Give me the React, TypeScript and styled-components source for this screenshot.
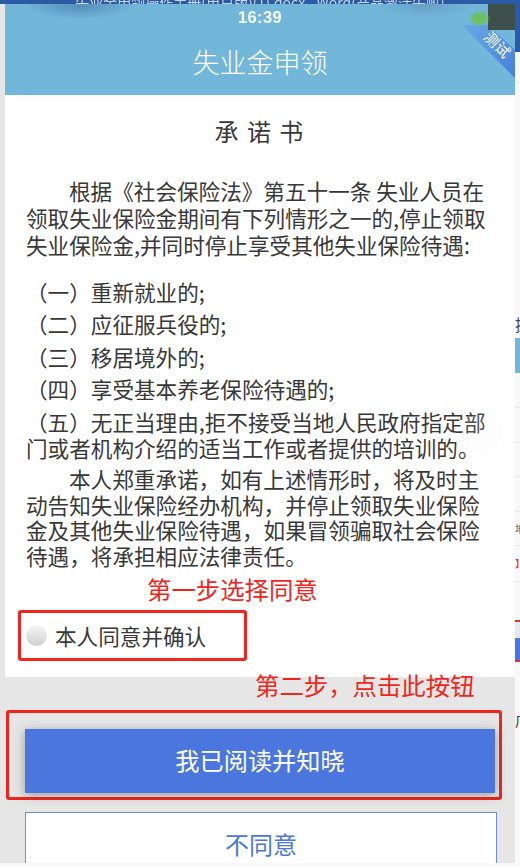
import React from 'react';
import styled, { createGlobalStyle } from 'styled-components';

const CJK = `"Noto Sans CJK SC", "Noto Sans", sans-serif`;

const GlobalStyle = createGlobalStyle`
  html, body {
    margin: 0;
    padding: 0;
    background: #f8f8f8;
    font-family: ${CJK};
  }
  * {
    box-sizing: border-box;
  }
`;

const Page = styled.div`
  position: relative;
  width: 520px;
  height: 867px;
  overflow: hidden;
  background: #f8f8f8;
`;

const BackBar = styled.div`
  height: 52px;
  background: #2a5ba4;
  color: #c9d6e8;
  font-size: 14px;
  line-height: 4px;
  text-align: center;
  white-space: nowrap;
  overflow: hidden;
  filter: blur(0.6px);
`;

const BackRows = styled.div`
  display: flex;
  flex-direction: column;
  align-items: flex-end;
`;

const BackRow = styled.div<{ $h: number; $bg?: string; $line?: boolean; $color?: string; $size?: number }>`
  width: 5px;
  height: ${(p) => p.$h}px;
  background: ${(p) => p.$bg || 'transparent'};
  border-bottom: ${(p) => (p.$line ? '1px solid #e8e8e8' : 'none')};
  color: ${(p) => p.$color || '#444'};
  font-size: ${(p) => p.$size || 10}px;
  line-height: ${(p) => p.$h}px;
  white-space: nowrap;
  overflow: hidden;
`;

const Phone = styled.div`
  position: absolute;
  left: 5px;
  top: 4px;
  width: 510px;
  height: 859px;
  display: flex;
  flex-direction: column;
  background: #e6e6e6;
  overflow: hidden;
  box-shadow: -5px 0 0 #e6e6e6;
`;

const Header = styled.header`
  position: relative;
  height: 91px;
  flex: none;
  display: flex;
  flex-direction: column;
  align-items: center;
  background:
    radial-gradient(ellipse 55px 13px at 75px 2px, rgba(62, 110, 155, 0.55), transparent),
    radial-gradient(ellipse 50px 11px at 420px 2px, rgba(90, 130, 165, 0.4), transparent),
    #72b6da;
  color: #fff;
`;

const Time = styled.div`
  margin-top: 3px;
  font-family: 'Liberation Sans', sans-serif;
  font-size: 16.5px;
  font-weight: 700;
  line-height: 20px;
  letter-spacing: 0.4px;
  opacity: 0.92;
`;

const Title = styled.h1`
  margin: 15px 0 0;
  font-size: 27px;
  font-weight: 300;
  line-height: 40px;
`;

const Ribbon = styled.svg`
  position: absolute;
  right: 0;
  top: 21px;
`;

const Signal = styled.div`
  position: absolute;
  right: 0;
  top: 0;
  width: 27px;
  height: 26px;
  background: #3f4f4c;
`;

const Dot = styled.span`
  position: absolute;
  left: -17px;
  top: 8px;
  width: 17px;
  height: 13px;
  border-radius: 50%;
  background: #6cc05c;
  filter: blur(1.5px);
`;

const Content = styled.section`
  height: 582px;
  flex: none;
  padding: 18px 23px 0 21px;
  background: #fff;
  color: #383838;
`;

const Heading = styled.h2`
  margin: 0 0 28px;
  font-size: 24px;
  font-weight: 400;
  line-height: 36px;
  text-align: center;
  word-spacing: 3px;
`;

const Para = styled.p`
  margin: 0 0 20.5px;
  font-size: 21.6px;
  line-height: 27px;
  text-indent: 43px;
`;

const Pledge = styled(Para)`
  margin: -1px 0 0;
  line-height: 25.5px;
`;

const Item = styled.p`
  margin: 0 0 6.5px;
  font-size: 21.6px;
  line-height: 26px;
`;

const Note = styled.div`
  color: #f0261c;
  font-size: 24.4px;
  line-height: 30px;
`;

const StepOne = styled(Note)`
  margin-top: 6px;
  padding-left: 121px;
`;

const RedFrame = styled.div`
  border: 3px solid #f0241c;
  border-radius: 3px;
`;

const AgreeBox = styled(RedFrame)`
  width: 229px;
  height: 51px;
  margin: 6px 0 0 -8px;
  display: flex;
  align-items: center;
  gap: 8px;
  padding-left: 5px;
  font-size: 21.6px;
`;

const Radio = styled.span`
  width: 21px;
  height: 21px;
  border-radius: 50%;
  background: linear-gradient(#f6f6f6, #cfcfcf);
`;

const Footer = styled.footer`
  flex: 1;
  display: flex;
  flex-direction: column;
`;

const StepTwo = styled(Note)`
  margin-top: -7px;
  padding-left: 250px;
`;

const ButtonFrame = styled(RedFrame)`
  width: 496px;
  height: 90px;
  margin: 10px 0 0 1px;
  padding: 16px 3px 0 16px;
`;

const PrimaryButton = styled.button`
  display: block;
  width: 470px;
  height: 64px;
  border: none;
  padding: 0 0 3px;
  background: #4a76dd;
  color: #fff;
  font-family: ${CJK};
  font-size: 24.2px;
  box-shadow: 0 2px 10px rgba(60, 60, 60, 0.45);
`;

const GhostButton = styled.button`
  display: block;
  width: 472px;
  height: 51px;
  margin: 12px 0 0 20px;
  border: 1.5px solid #6f8fd8;
  border-bottom: none;
  background: #fff;
  color: #4a76dd;
  font-family: ${CJK};
  font-size: 24px;
  padding-top: 12px;
`;

const FloatBall = styled.div`
  position: absolute;
  left: 457px;
  top: 409px;
  width: 40px;
  height: 40px;
  border-radius: 50%;
  background: rgba(235, 235, 235, 0.12);
`;

export default function App() {
  return (
    <>
      <GlobalStyle />
      <Page>
        <BackBar>失业金申领操作手册(用户版)(1).docx - Word(产品激活失败)</BackBar>
        <BackRows>
          <BackRow $h={31} $line />
          <BackRow $h={228} />
          <BackRow $h={27} $size={16}>提</BackRow>
          <BackRow $h={35} $bg="#72b6da" />
          <BackRow $h={35} $line />
          <BackRow $h={35} $line />
          <BackRow $h={34} $line />
          <BackRow $h={35} $line />
          <BackRow $h={34} $line $color="#666">地</BackRow>
          <BackRow $h={36} $line $color="#e03030">】</BackRow>
          <BackRow $h={38} />
          <BackRow $h={2} $bg="#e03030" />
          <BackRow $h={16} $bg="#e4e8f2" />
          <BackRow $h={22} $bg="#4a76dd" />
          <BackRow $h={2} $bg="#e03030" />
          <BackRow $h={48} />
          <BackRow $h={20} $size={15}>广</BackRow>
        </BackRows>
        <Phone>
          <Header>
            <Time>16:39</Time>
            <Title>失业金申领</Title>
            <Ribbon width="54" height="54" viewBox="0 0 54 54">
              <defs>
                <linearGradient id="ribbon" x1="0" y1="0" x2="1" y2="1">
                  <stop offset="0" stopColor="#6aa8e8" />
                  <stop offset="1" stopColor="#4680dc" />
                </linearGradient>
              </defs>
              <polygon points="1,0 27,0 54,25 54,53" fill="url(#ribbon)" />
              <text
                x="36"
                y="25"
                fill="#fff"
                fontSize="15"
                textAnchor="middle"
                transform="rotate(45 36 20)"
              >
                测试
              </text>
            </Ribbon>
            <Signal>
              <Dot />
            </Signal>
          </Header>
          <Content>
            <Heading>承 诺 书</Heading>
            <Para>根据《社会保险法》第五十一条 失业人员在领取失业保险金期间有下列情形之一的,停止领取失业保险金,并同时停止享受其他失业保险待遇:</Para>
            <Item>（一）重新就业的;</Item>
            <Item>（二）应征服兵役的;</Item>
            <Item>（三）移居境外的;</Item>
            <Item>（四）享受基本养老保险待遇的;</Item>
            <Item>（五）无正当理由,拒不接受当地人民政府指定部门或者机构介绍的适当工作或者提供的培训的。</Item>
            <Pledge>本人郑重承诺，如有上述情形时，将及时主动告知失业保险经办机构，并停止领取失业保险金及其他失业保险待遇，如果冒领骗取社会保险待遇，将承担相应法律责任。</Pledge>
            <StepOne>第一步选择同意</StepOne>
            <AgreeBox>
              <Radio />
              本人同意并确认
            </AgreeBox>
          </Content>
          <Footer>
            <StepTwo>第二步，点击此按钮</StepTwo>
            <ButtonFrame>
              <PrimaryButton>我已阅读并知晓</PrimaryButton>
            </ButtonFrame>
            <GhostButton>不同意</GhostButton>
          </Footer>
          <FloatBall />
        </Phone>
      </Page>
    </>
  );
}
